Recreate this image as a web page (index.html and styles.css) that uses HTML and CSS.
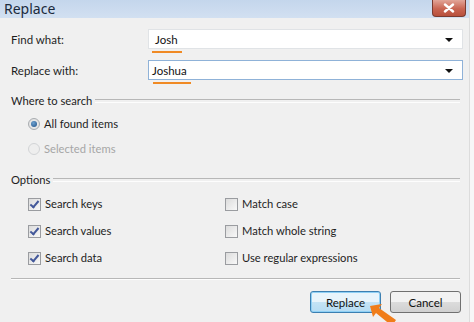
FILE: index.html
```html
<!DOCTYPE html>
<html lang="en">
<head>
  <meta charset="UTF-8">
  <title>Replace</title>
  <link rel="stylesheet" href="styles.css">
</head>
<body>

<div class="dialog">
  <!-- Title Bar -->
  <div class="titlebar">
    <span class="title">Replace</span>
    <span class="close">
      <svg width="14" height="10" viewBox="0 0 14 10"><path d="M3 1.5 L11 8.5 M11 1.5 L3 8.5" stroke="#fff" stroke-width="2.4" stroke-linecap="round"/></svg>
    </span>
  </div>

  <div class="content">
    <!-- Find / Replace fields -->
    <div class="field">
      <label>Find what:</label>
      <div class="combo">
        <span class="value mark">Josh</span>
        <span class="arrow"></span>
      </div>
    </div>
    <div class="field">
      <label>Replace with:</label>
      <div class="combo focused">
        <span class="value mark">Joshua</span>
        <span class="arrow"></span>
      </div>
    </div>

    <!-- Where to search -->
    <div class="legend legend-where">Where to search</div>
    <div class="choices">
      <div class="choice"><span class="radio checked"></span>All found items</div>
      <div class="choice disabled"><span class="radio"></span>Selected items</div>
    </div>

    <!-- Options -->
    <div class="legend legend-options">Options</div>
    <div class="options">
      <div class="choice"><span class="check checked"></span>Search keys</div>
      <div class="choice"><span class="check"></span>Match case</div>
      <div class="choice"><span class="check checked"></span>Search values</div>
      <div class="choice"><span class="check"></span>Match whole string</div>
      <div class="choice"><span class="check checked"></span>Search data</div>
      <div class="choice"><span class="check"></span>Use regular expressions</div>
    </div>

    <div class="separator"></div>

    <div class="buttons">
      <button class="default">Replace</button>
      <button>Cancel</button>
    </div>
  </div>

  <!-- pointer arrow -->
  <svg class="pointer" width="28" height="22" viewBox="0 0 28 22">
    <path d="M0 2 L12 0 L9 4 L26 16 L22 22 L6 9 L3 13 Z" fill="#f07d1a"/>
  </svg>
</div>

</body>
</html>
```

FILE: styles.css
```css
/* General Styles */
* {
  margin: 0;
  padding: 0;
  box-sizing: border-box;
}

body {
  font-family: Lato, "Liberation Sans", sans-serif;
  font-size: 11.2px;
  color: #1e1e1e;
  background-color: #f7f7f7;
  width: 474px;
  height: 322px;
  overflow: hidden;
}

.dialog {
  position: relative;
  width: 470px;
  height: 322px;
  background-color: #f0f0f0;
  border-right: 1px solid #dcdcdc;
}

/* Title Bar */
.titlebar {
  height: 18px;
  display: flex;
  align-items: center;
  justify-content: space-between;
  background: linear-gradient(#c4d6ec, #d2e0f1);
  padding-left: 4px;
  padding-right: 3px;
}

.title {
  font-family: "Noto Sans", sans-serif;
  font-size: 14px;
  color: #1b2a3c;
  line-height: 18px;
}

.close {
  width: 34px;
  height: 17px;
  align-self: flex-start;
  display: flex;
  align-items: center;
  justify-content: center;
  background: linear-gradient(#e2a598, #c96552 55%, #b8503c);
  border: 1px solid #7a3b30;
  border-top: none;
  border-radius: 0 0 4px 4px;
}

/* Content */
.content {
  padding: 0 6px 0 11px;
}

.field {
  display: grid;
  grid-template-columns: 137px 1fr;
  align-items: center;
  margin-top: 11px;
  font-size: 11.5px;
}

.combo {
  position: relative;
  height: 20px;
  background-color: #fff;
  border: 1px solid #e0e3e6;
  display: flex;
  align-items: center;
  padding-left: 6px;
}

.combo.focused {
  border-color: #8fb2d8;
  padding-left: 3px;
}

.value {
  position: relative;
  color: #111;
}

.value.mark::after {
  content: "";
  position: absolute;
  left: -3px;
  right: -4px;
  bottom: -7px;
  height: 2px;
  background-color: #f08a24;
}

.combo.focused .value.mark::after {
  left: 1px;
  bottom: -7px;
}

.arrow {
  position: absolute;
  right: 9px;
  top: 8px;
  border-left: 4px solid transparent;
  border-right: 4px solid transparent;
  border-top: 4px solid #111;
}

/* Group legends */
.legend {
  display: flex;
  align-items: center;
  line-height: 16px;
  padding-right: 3px;
}

.legend::after {
  content: "";
  flex: 1;
  height: 2px;
  margin-left: 3px;
  border-top: 1px solid #b7b7b7;
  border-bottom: 1px solid #fdfdfd;
}

.legend-where {
  margin-top: 13px;
}

.legend-options {
  margin-top: 15px;
}

.choices {
  display: flex;
  flex-direction: column;
  gap: 9px;
  margin-top: 7px;
  padding-left: 17px;
}

.options {
  display: grid;
  grid-template-columns: 197px 1fr;
  row-gap: 11px;
  margin-top: 8px;
  padding-left: 17px;
}

.choice {
  display: flex;
  align-items: center;
  gap: 4px;
  line-height: 16px;
}

.choice.disabled {
  color: #a6a6a6;
}

.radio {
  width: 12px;
  height: 12px;
  border-radius: 50%;
  border: 1px solid #a8acb0;
  background: radial-gradient(#f2f2f2, #dcdcdc);
  display: flex;
  align-items: center;
  justify-content: center;
}

.radio.checked::after {
  content: "";
  width: 6px;
  height: 6px;
  border-radius: 50%;
  background: radial-gradient(circle at 40% 35%, #6ea2d0, #1e4f86);
}

.disabled .radio {
  border-color: #d2d4d6;
  background: #eeeeee;
}

.check {
  width: 13px;
  height: 13px;
  border: 1px solid #9a9ca0;
  background: linear-gradient(135deg, #dcdcdc, #f8f8f8);
  display: flex;
  align-items: center;
  justify-content: center;
}

.check.checked::after {
  content: "";
  width: 3px;
  height: 7px;
  margin-top: -2px;
  border-right: 2px solid #43589a;
  border-bottom: 2px solid #43589a;
  transform: rotate(40deg);
}

.separator {
  height: 2px;
  margin-top: 12px;
  margin-right: 3px;
  border-top: 1px solid #b7b7b7;
  border-bottom: 1px solid #fdfdfd;
}

/* Buttons */
.buttons {
  display: flex;
  justify-content: flex-end;
  gap: 9px;
  margin-top: 11px;
  margin-right: 2px;
}

button {
  width: 71px;
  height: 22px;
  font-family: inherit;
  font-size: 11.5px;
  color: #111;
  border: 1px solid #707070;
  border-radius: 3px;
  background: linear-gradient(#f2f2f2 50%, #dcdcdc 50%, #d0d0d0);
}

button.default {
  border-color: #3c7fb1;
  background: linear-gradient(#e8f4fb 50%, #c4e3f5 50%, #b6dcf3);
  box-shadow: inset 0 0 0 1px #8fd0f5;
}

.pointer {
  position: absolute;
  left: 370px;
  top: 304px;
}
```
